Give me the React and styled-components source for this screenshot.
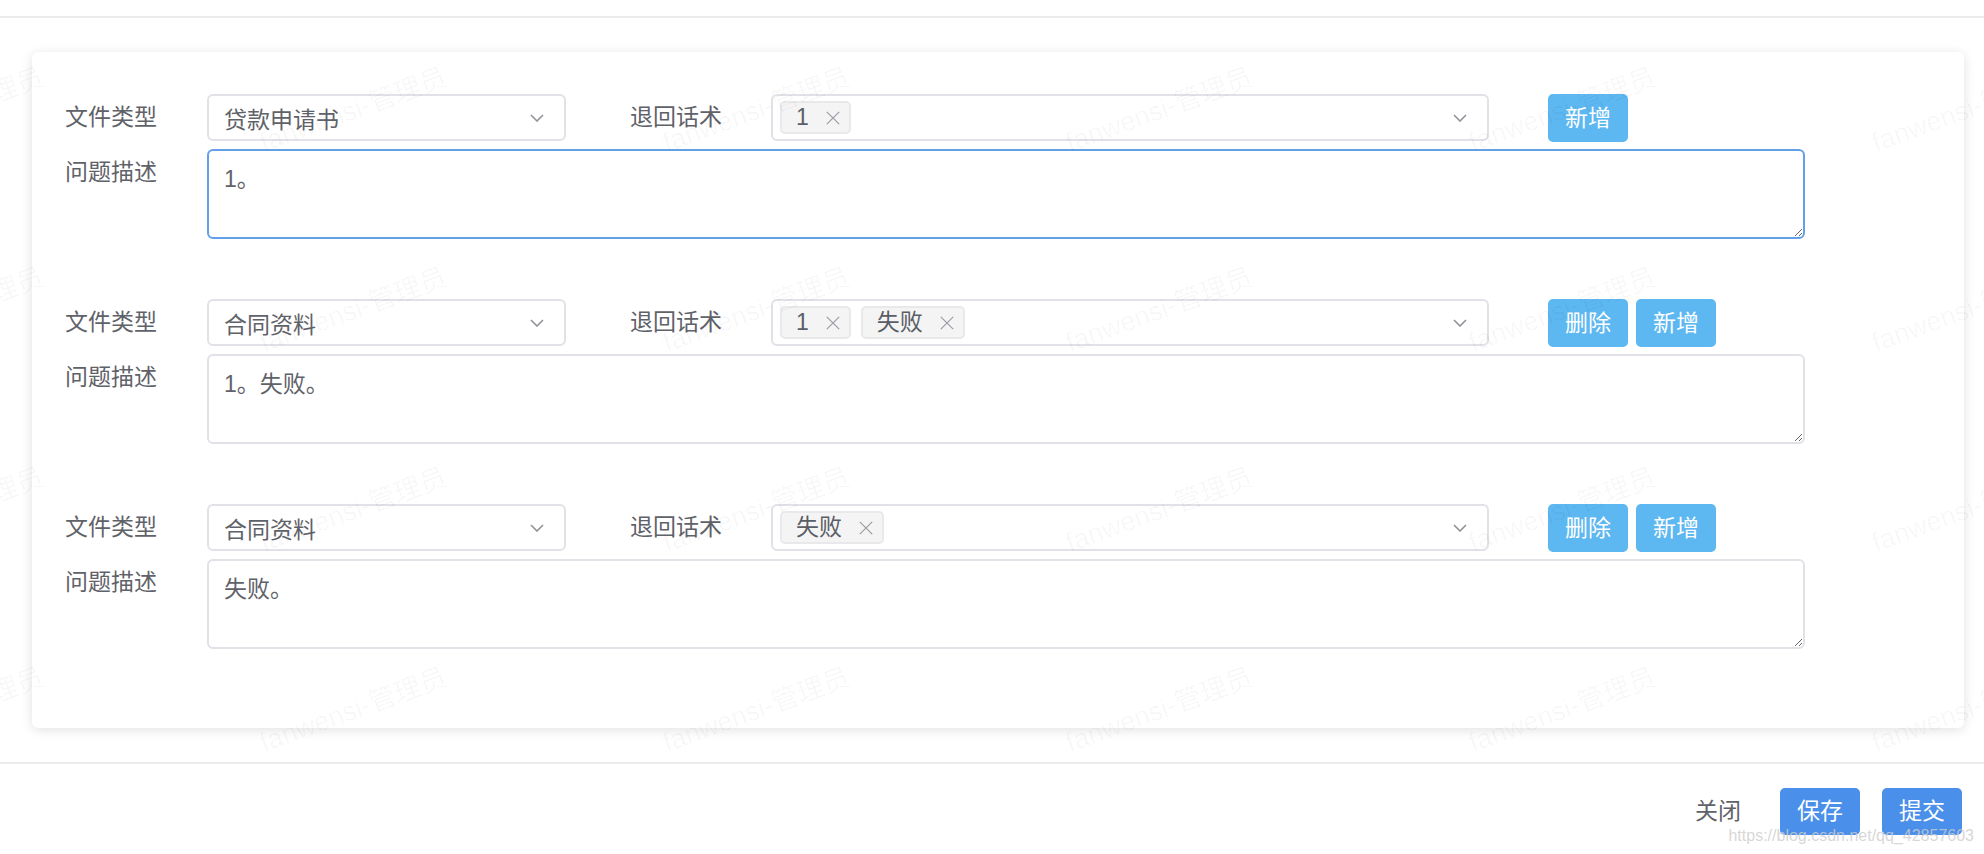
import styled, { createGlobalStyle } from "styled-components";

const GlobalStyle = createGlobalStyle`
  * {
    box-sizing: border-box;
  }
  body {
    margin: 0;
    background: #ffffff;
    font-family: "Liberation Sans", "Noto Sans CJK SC", sans-serif;
    color: #606266;
  }
`;

const FONT = `"Liberation Sans", "Noto Sans CJK SC", sans-serif`;

const Page = styled.div`
  position: relative;
  width: 1984px;
  height: 854px;
  overflow: hidden;
  display: flex;
  flex-direction: column;
`;

const TopBar = styled.div`
  height: 18px;
  flex-shrink: 0;
  border-bottom: 2px solid #ebebeb;
`;

const Body = styled.div`
  padding: 34px 20px 0 32px;
`;

const Card = styled.div`
  height: 676px;
  padding: 42px 0 0 33px;
  background: #fff;
  border-radius: 6px;
  box-shadow: 0 2px 12px 0 rgba(0, 0, 0, 0.12);
  display: flex;
  flex-direction: column;
  gap: 60px;
`;

const Entry = styled.div`
  display: flex;
  flex-direction: column;
  gap: 7px;
`;

const Row = styled.div`
  position: relative;
  display: flex;
  align-items: flex-start;
`;

const Label = styled.div`
  width: ${(p) => p.$width}px;
  margin-left: ${(p) => p.$offset || 0}px;
  flex-shrink: 0;
  font-size: 23px;
  line-height: 47px;
  color: #5f6269;
  white-space: nowrap;
`;

const SelectBox = styled.div`
  position: relative;
  width: ${(p) => p.$width}px;
  height: 47px;
  flex-shrink: 0;
  border: 2px solid #e1e2e7;
  border-radius: 6px;
  display: flex;
  align-items: center;
  gap: 10px;
  padding: 0 40px 0 ${(p) => (p.$multi ? 7 : 15)}px;
  font-size: 23px;
  color: #5f6269;
`;

const Arrow = styled.svg`
  position: absolute;
  right: 20px;
  top: 50%;
  margin-top: -4px;
`;

const Tag = styled.span`
  height: 33px;
  display: inline-flex;
  align-items: center;
  padding: 0 9px 0 14px;
  background: #f4f4f5;
  border: 2px solid #e9e9eb;
  border-radius: 5px;
  font-size: 23px;
  line-height: 29px;
  color: #5a5e66;
`;

const TagClose = styled.svg`
  margin-left: 17px;
  flex-shrink: 0;
`;

const Actions = styled.div`
  display: flex;
  gap: 8px;
  margin-left: 59px;
`;

const Button = styled.button`
  width: 80px;
  height: ${(p) => p.$height || 48}px;
  padding: 0;
  border: none;
  border-radius: 5px;
  background: ${(p) => p.$bg || "transparent"};
  color: ${(p) => (p.$bg ? "#ffffff" : "#5f6269")};
  font-family: ${FONT};
  font-size: 23px;
  line-height: 1;
  cursor: pointer;
`;

const DescLabel = styled(Label)`
  position: absolute;
  left: 0;
  top: 0;
`;

const TextArea = styled.textarea`
  display: block;
  width: 1598px;
  height: 90px;
  margin-left: 142px;
  padding: 11px 15px;
  border: 2px solid ${(p) => (p.$focused ? "#62a0ea" : "#e1e2e7")};
  border-radius: 6px;
  font-family: ${FONT};
  font-size: 23px;
  line-height: 35px;
  color: #5f6269;
  background: #fff;
  resize: vertical;
  outline: none;
`;

const Footer = styled.div`
  margin-top: 34px;
  border-top: 2px solid #ebebeb;
  padding: 24px 22px 0 0;
  display: flex;
  justify-content: flex-end;
  gap: 22px;
`;

const Watermarks = styled.div`
  position: absolute;
  left: -148px;
  top: 63px;
  display: grid;
  grid-template-columns: repeat(6, 403px);
  grid-auto-rows: 200px;
  pointer-events: none;
`;

const Mark = styled.div`
  padding-top: 30px;
  span {
    display: inline-block;
    transform: rotate(-20deg);
    font-family: ${FONT};
    font-size: 27px;
    line-height: 34px;
    color: rgba(0, 0, 0, 0.035);
    white-space: nowrap;
  }
`;

const SiteMark = styled.div`
  position: absolute;
  right: 10px;
  bottom: 9px;
  font-family: "Liberation Sans", sans-serif;
  font-size: 16px;
  line-height: 18px;
  color: rgba(205, 205, 205, 0.8);
  pointer-events: none;
`;

const Chevron = () => (
  <Arrow width="14" height="8" viewBox="0 0 14 8">
    <path d="M1 1 L7 7 L13 1" fill="none" stroke="#8f9299" strokeWidth="1.6" />
  </Arrow>
);

const CloseIcon = () => (
  <TagClose width="14" height="14" viewBox="0 0 14 14">
    <path d="M0.8 0.8 L13.2 13.2 M13.2 0.8 L0.8 13.2" stroke="#9a9ca2" strokeWidth="1.2" />
  </TagClose>
);

const entries = [
  { type: "贷款申请书", tags: ["1"], desc: "1。", del: false, focused: true },
  { type: "合同资料", tags: ["1", "失败"], desc: "1。失败。", del: true },
  { type: "合同资料", tags: ["失败"], desc: "失败。", del: true },
];

function FormEntry({ item }) {
  return (
    <Entry>
      <Row>
        <Label $width={142}>文件类型</Label>
        <SelectBox $width={359}>
          {item.type}
          <Chevron />
        </SelectBox>
        <Label $width={141} $offset={64}>
          退回话术
        </Label>
        <SelectBox $width={718} $multi>
          {item.tags.map((t) => (
            <Tag key={t}>
              {t}
              <CloseIcon />
            </Tag>
          ))}
          <Chevron />
        </SelectBox>
        <Actions>
          {item.del && <Button $bg="#5db7f1">删除</Button>}
          <Button $bg="#5db7f1">新增</Button>
        </Actions>
      </Row>
      <Row>
        <DescLabel $width={142}>问题描述</DescLabel>
        <TextArea readOnly defaultValue={item.desc} $focused={item.focused} />
      </Row>
    </Entry>
  );
}

export default function App() {
  return (
    <Page>
      <GlobalStyle />
      <TopBar />
      <Body>
        <Card>
          {entries.map((item, i) => (
            <FormEntry key={i} item={item} />
          ))}
        </Card>
      </Body>
      <Footer>
        <Button $height={47}>关闭</Button>
        <Button $height={47} $bg="#4a8fea">
          保存
        </Button>
        <Button $height={47} $bg="#4a8fea">
          提交
        </Button>
      </Footer>
      <Watermarks>
        {Array.from({ length: 24 }).map((_, i) => (
          <Mark key={i}>
            <span>fanwensi-管理员</span>
          </Mark>
        ))}
      </Watermarks>
      <SiteMark>https://blog.csdn.net/qq_42857603</SiteMark>
    </Page>
  );
}
